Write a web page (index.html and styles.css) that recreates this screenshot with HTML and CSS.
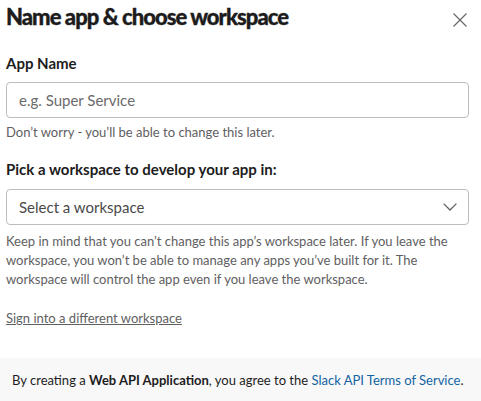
FILE: index.html
```html
<!DOCTYPE html>
<html lang="en">
<head>
<meta charset="utf-8">
<link rel="stylesheet" href="styles.css">
</head>
<body>
<div class="dialog">
  <div class="content">
    <div class="header">
      <h1 class="title">Name app &amp; choose workspace</h1>
      <span class="close">
        <svg width="14" height="14" viewBox="0 0 14 14"><path d="M0.5 0.5L13.5 13.5M13.5 0.5L0.5 13.5" stroke="#6b6a6b" stroke-width="1.3" fill="none"/></svg>
      </span>
    </div>
    <div class="field">
      <label class="label">App Name</label>
      <div class="input"><span class="placeholder">e.g. Super Service</span></div>
      <p class="hint">Don’t worry - you’ll be able to change this later.</p>
    </div>
    <div class="field second">
      <label class="label">Pick a workspace to develop your app in:</label>
      <div class="input select"><span class="placeholder">Select a workspace</span>
        <svg class="chev" width="14" height="8" viewBox="0 0 14 8"><path d="M0.6 0.6L7 7L13.4 0.6" stroke="#616061" stroke-width="1.3" fill="none"/></svg>
      </div>
      <p class="note">Keep in mind that you can’t change this app’s workspace later. If you leave the workspace, you won’t be able to manage any apps you’ve built for it. The workspace will control the app even if you leave the workspace.</p>
    </div>
    <a class="signin" href="#">Sign into a different workspace</a>
  </div>
  <div class="footer">By creating a <b>Web API Application</b>, you agree to the <a href="#" class="tos">Slack API Terms of Service</a>.</div>
</div>
</body>
</html>
```
FILE: styles.css
```css
html, body {
  margin: 0;
  padding: 0;
  background: #ffffff;
}
body {
  font-family: Lato, "Noto Sans", sans-serif;
  color: #1d1c1d;
  width: 481px;
  height: 401px;
  overflow: hidden;
}
.dialog {
  display: flex;
  flex-direction: column;
}
.content {
  padding: 0 12px 0 6px;
  height: 358px;
  box-sizing: border-box;
}
.header {
  display: flex;
  justify-content: space-between;
  align-items: flex-start;
  height: 48px;
}
.title {
  margin: 0;
  font-size: 22px;
  font-weight: 900;
  line-height: 34px;
  letter-spacing: -0.95px;
  -webkit-text-stroke: 0.35px #1d1c1d;
  color: #1d1c1d;
}
.close {
  display: block;
  margin-top: 13px;
  margin-right: 2px;
  width: 14px;
  height: 14px;
}
.close svg { display: block; }
.field { display: flex; flex-direction: column; }
.label {
  font-size: 15px;
  font-weight: 700;
  line-height: 22px;
  margin-top: 4px;
  margin-bottom: 8px;
}
.second .label { margin-top: 5px; margin-bottom: 9px; }
.input {
  height: 36px;
  box-sizing: border-box;
  border: 1px solid #bdbcbd;
  border-radius: 4px;
  padding: 0 12px;
  display: flex;
  align-items: center;
  justify-content: space-between;
}
.placeholder {
  font-size: 15px;
  color: #6b6a6b;
}
.select .placeholder { color: #4a494a; }
.chev { display: block; margin-right: -1px; }
.hint {
  margin: 5px 0 0;
  font-size: 13px;
  line-height: 18px;
  color: #616061;
}
.second { margin-top: 12px; }
.note {
  margin: 7px 0 0;
  font-size: 13px;
  line-height: 19px;
  color: #616061;
}
.signin {
  display: inline-block;
  margin-top: 20px;
  font-size: 13px;
  line-height: 18px;
  color: #616061;
  text-decoration: underline;
}
.footer {
  background: #f8f8f8;
  height: 43px;
  box-sizing: border-box;
  padding: 13px 12px 0;
  font-size: 13px;
  line-height: 18px;
  color: #1d1c1d;
}
.footer b { font-weight: 700; }
.tos { color: #1264a3; text-decoration: none; }
```
